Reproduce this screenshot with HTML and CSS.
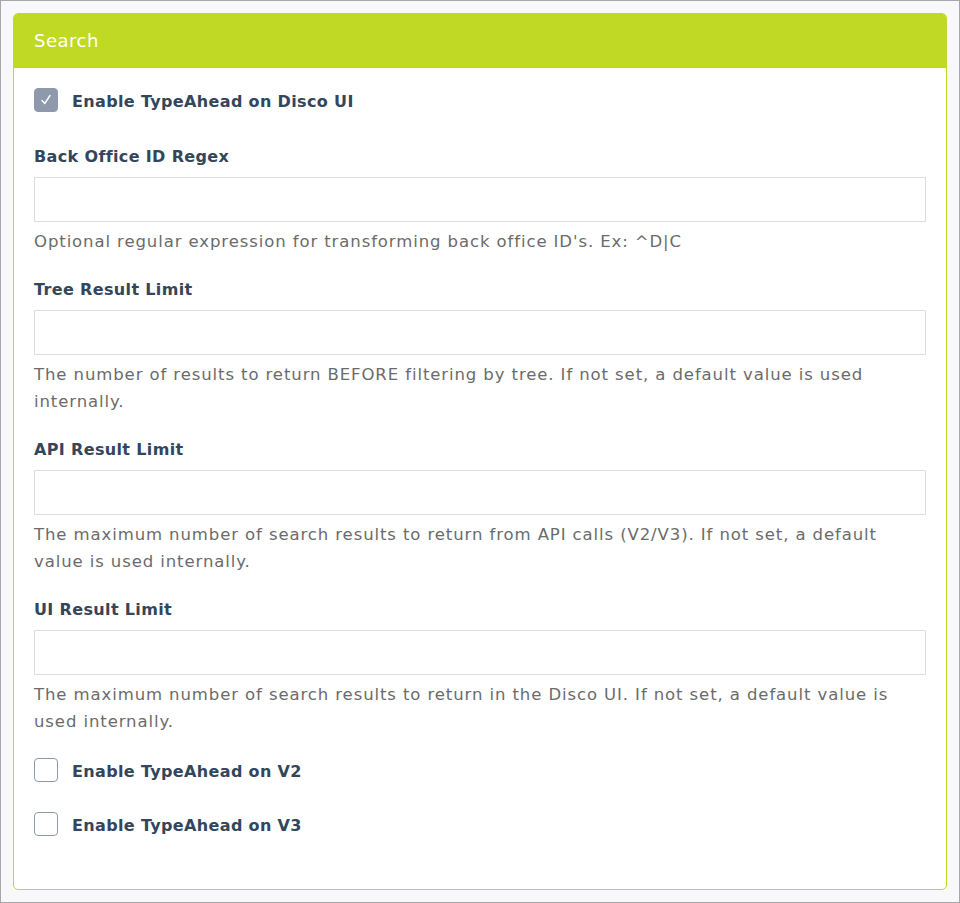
FILE: index.html
```html
<!DOCTYPE html>
<html lang="en">
<head>
  <meta charset="UTF-8">
  <title>Search Settings</title>
  <link rel="stylesheet" href="styles.css">
</head>
<body>

  <div class="page">
    <div class="card">
      <div class="card-header">Search</div>

      <div class="card-body">
        <label class="check-row">
          <span class="box checked">
            <svg width="14" height="14" viewBox="0 0 14 14"><polyline points="3,7.5 5.8,10.5 11,2.5" fill="none" stroke="#fff" stroke-width="1.4" stroke-linecap="round" stroke-linejoin="round"/></svg>
          </span>
          <span class="check-label">Enable TypeAhead on Disco UI</span>
        </label>

        <div class="form-group first">
          <div class="field-label">Back Office ID Regex</div>
          <input type="text" class="field-input">
          <div class="help">Optional regular expression for transforming back office ID's. Ex: ^D|C</div>
        </div>

        <div class="form-group">
          <div class="field-label">Tree Result Limit</div>
          <input type="text" class="field-input">
          <div class="help">The number of results to return BEFORE filtering by tree. If not set, a default value is used internally.</div>
        </div>

        <div class="form-group">
          <div class="field-label">API Result Limit</div>
          <input type="text" class="field-input">
          <div class="help">The maximum number of search results to return from API calls (V2/V3). If not set, a default value is used internally.</div>
        </div>

        <div class="form-group">
          <div class="field-label">UI Result Limit</div>
          <input type="text" class="field-input">
          <div class="help">The maximum number of search results to return in the Disco UI. If not set, a default value is used internally.</div>
        </div>

        <label class="check-row spaced">
          <span class="box"></span>
          <span class="check-label">Enable TypeAhead on V2</span>
        </label>

        <label class="check-row spaced">
          <span class="box"></span>
          <span class="check-label">Enable TypeAhead on V3</span>
        </label>
      </div>
    </div>
  </div>

</body>
</html>
```

FILE: styles.css
```css
* {
  box-sizing: border-box;
}

body {
  margin: 0;
  padding: 0;
  font-family: 'DejaVu Sans', 'Open Sans', sans-serif;
  background-color: #ffffff;
}

.page {
  width: 960px;
  height: 903px;
  border: 1px solid #a7a7aa;
  background-color: #f8f8fb;
  padding: 12px;
}

.card {
  background-color: #fff;
  border: 1px solid #c0d925;
  border-radius: 5px;
  overflow: hidden;
  height: 877px;
}

.card-header {
  background-color: #c0d925;
  color: #fff;
  font-size: 18px;
  letter-spacing: 0.5px;
  height: 54px;
  line-height: 54px;
  padding: 0 20px;
}

.card-body {
  padding: 20px 20px;
}

.check-row {
  display: flex;
  align-items: center;
  gap: 14px;
  height: 24px;
}

.check-row.spaced {
  margin-top: 23px;
  margin-bottom: 30px;
}

.box {
  width: 24px;
  height: 24px;
  border: 1.5px solid #8e9aab;
  border-radius: 4px;
  background: #fff;
  display: flex;
  align-items: center;
  justify-content: center;
}

.box.checked {
  background-color: #8e9aab;
}

.check-label,
.field-label {
  font-size: 16px;
  font-weight: 600;
  letter-spacing: 0.35px;
  color: #33465a;
  padding-top: 2px;
}

.form-group {
  margin-top: 23px;
}

.form-group.first {
  margin-top: 33px;
}

.field-label {
  line-height: 24px;
  padding-top: 0;
}

.field-input {
  display: block;
  width: 100%;
  height: 45px;
  margin-top: 8px;
  border: 1px solid #dcdce2;
  border-radius: 0;
  background: #fff;
  outline: none;
}

.help {
  margin-top: 6px;
  font-size: 16.5px;
  line-height: 27px;
  color: #6b6b6b;
  letter-spacing: 0.9px;
}
```
